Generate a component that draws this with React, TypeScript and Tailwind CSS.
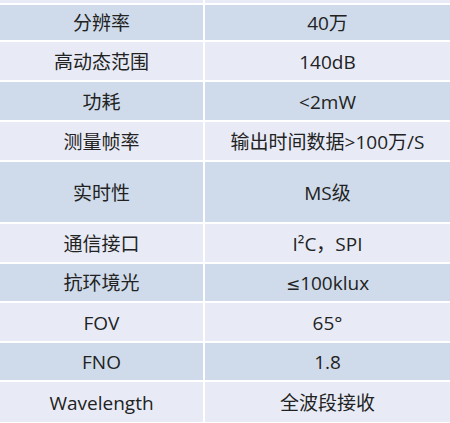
const rows: { label: string; value: React.ReactNode; h: string }[] = [
  { label: '分辨率', value: '40万', h: 'h-[35px]' },
  { label: '高动态范围', value: '140dB', h: 'h-[38px]' },
  { label: '功耗', value: '<2mW', h: 'h-[38px]' },
  { label: '测量帧率', value: '输出时间数据>100万/S', h: 'h-[38px]' },
  { label: '实时性', value: 'MS级', h: 'h-[60px]' },
  { label: '通信接口', value: 'I²C，SPI', h: 'h-[38px]' },
  {
    label: '抗环境光',
    value: (
      <>
        <span className="text-[17px]" style={{ fontFamily: '"DejaVu Sans", sans-serif' }}>≤</span>100klux
      </>
    ),
    h: 'h-[37px]',
  },
  { label: 'FOV', value: '65°', h: 'h-[38px]' },
  { label: 'FNO', value: '1.8', h: 'h-[37px]' },
  { label: 'Wavelength', value: '全波段接收', h: 'h-[40px]' },
];

export default function App() {
  return (
    <div
      className="w-[450px] h-[423px] overflow-hidden bg-white text-[19px] text-[#222]"
      style={{ fontFamily: '"Open Sans", "Noto Sans CJK SC", sans-serif' }}
    >
      <div className="grid grid-cols-[203px_1fr] gap-[2px]">
        {/* partial row cut off at the top */}
        <div className="h-[3px] bg-[#e8ebf6]" />
        <div className="h-[3px] bg-[#e8ebf6]" />
        {rows.map((row, i) => {
          const bg = i % 2 === 0 ? 'bg-[#cfdbea]' : 'bg-[#e8ebf6]';
          return (
            <div key={row.label} className="contents">
              <div className={`${row.h} ${bg} flex items-center justify-center leading-none pt-[2px]`}>
                {row.label}
              </div>
              <div className={`${row.h} ${bg} flex items-center justify-center leading-none pt-[2px]`}>
                <span>{row.value}</span>
              </div>
            </div>
          );
        })}
      </div>
    </div>
  );
}
